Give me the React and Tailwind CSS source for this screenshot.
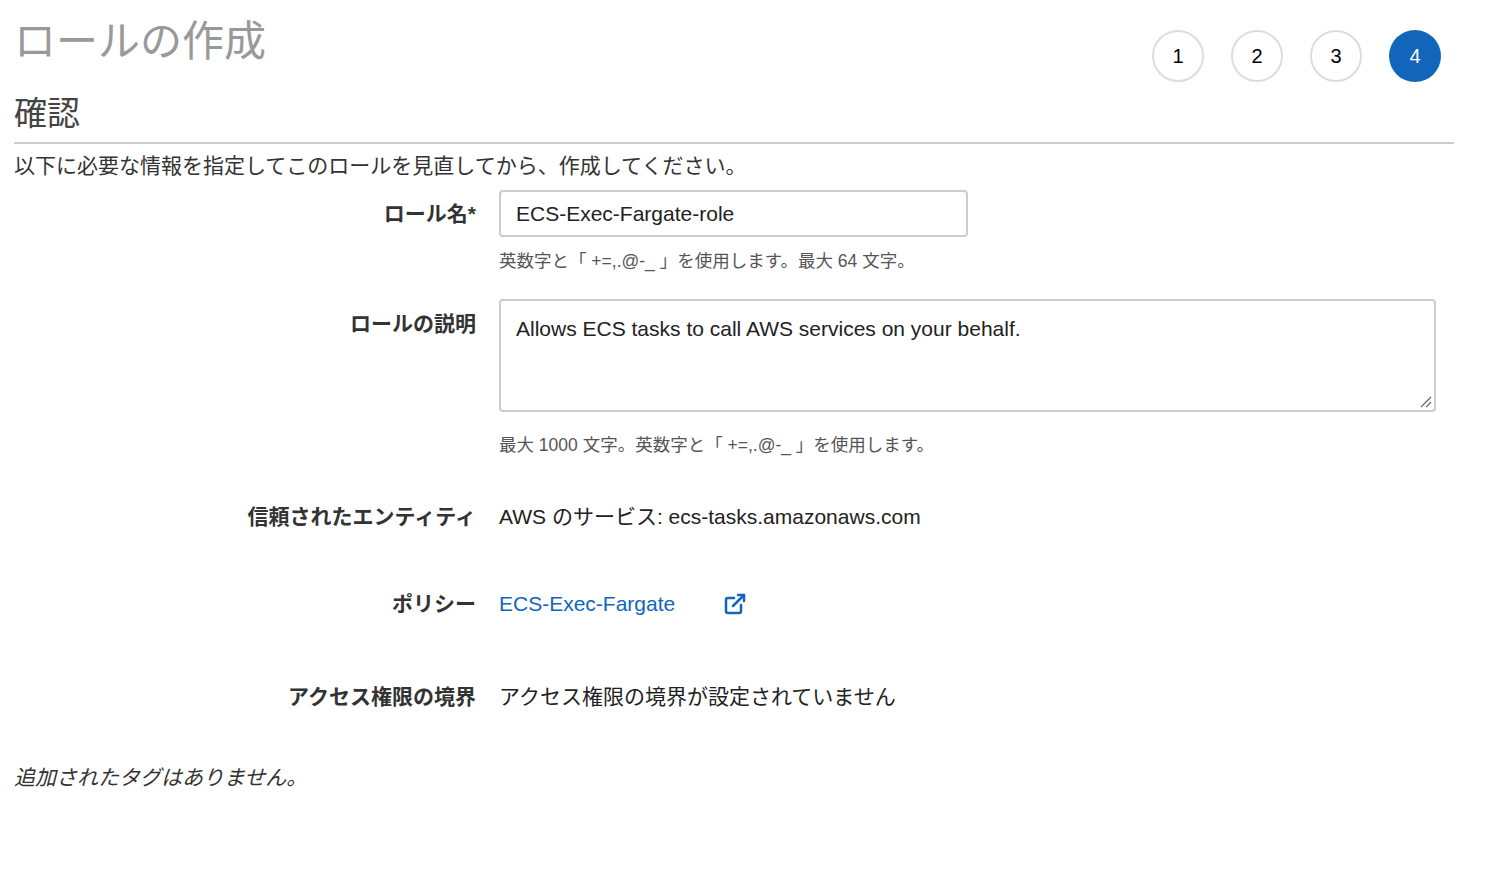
import { ExternalLink } from "lucide-react";

const font = { fontFamily: '"Liberation Sans", "Noto Sans CJK JP", sans-serif' };

function Row({ label, children, className = "" }) {
  return (
    <div className={"flex " + className}>
      <div className="w-[462px] shrink-0 text-right text-[21px] font-bold text-[#333]">{label}</div>
      <div className="ml-[23px] flex-1">{children}</div>
    </div>
  );
}

export default function App() {
  return (
    <div className="relative w-[1492px] h-[874px] bg-white pl-[14px] pr-[38px]" style={font}>
      <div className="flex items-start justify-between">
        <h1 className="pt-[16px] text-[42px] leading-[52px] text-[#999]">ロールの作成</h1>
        <div className="mt-[30px] mr-[13px] flex gap-[27px]">
          {["1", "2", "3"].map((n) => (
            <div key={n} className="flex h-[52px] w-[52px] items-center justify-center rounded-full border-2 border-[#ddd] text-[20px] text-black">{n}</div>
          ))}
          <div className="flex h-[52px] w-[52px] items-center justify-center rounded-full bg-[#1166bb] text-[20px] text-white">4</div>
        </div>
      </div>
      <h2 className="mt-[12px] text-[33px] leading-[40px] text-[#444]">確認</h2>
      <div className="mt-[8px] h-[2px] bg-[#ccc]" />
      <p className="mt-[8px] text-[21px] leading-[28px] text-[#333]">以下に必要な情報を指定してこのロールを見直してから、作成してください。</p>

      <Row label="ロール名*" className="mt-[10px] items-center">
        <div className="flex h-[47px] w-[469px] items-center rounded-[4px] border-2 border-[#ccc] px-[15px] text-[21px] text-[#222]">ECS-Exec-Fargate-role</div>
      </Row>
      <Row label="" className="mt-[11px]">
        <p className="text-[17.5px] text-[#555]">英数字と「 +=,.@-_ 」を使用します。最大 64 文字。</p>
      </Row>

      <Row label={<span className="block pt-[9px]">ロールの説明</span>} className="mt-[25px]">
        <div className="relative h-[113px] w-[937px] rounded-[4px] border-2 border-[#ccc] px-[15px] pt-[12px] text-[21px] text-[#222]">
          Allows ECS tasks to call AWS services on your behalf.
          <svg className="absolute bottom-[2px] right-[2px]" width="14" height="14" viewBox="0 0 14 14"><path d="M13 3L3 13M13 8L8 13" stroke="#666" strokeWidth="1.2" /></svg>
        </div>
      </Row>
      <Row label="" className="mt-[20px]">
        <p className="text-[17.5px] text-[#555]">最大 1000 文字。英数字と「 +=,.@-_ 」を使用します。</p>
      </Row>

      <Row label="信頼されたエンティティ" className="mt-[42px]">
        <p className="text-[21px] text-[#222]">AWS のサービス: ecs-tasks.amazonaws.com</p>
      </Row>
      <Row label="ポリシー" className="mt-[56px]">
        <div className="flex items-center text-[21px] text-[#1166bb]">
          ECS-Exec-Fargate<span className="w-[48px]" />
          <ExternalLink size={24} strokeWidth={2.5} />
        </div>
      </Row>
      <Row label="アクセス権限の境界" className="mt-[61px]">
        <p className="text-[21px] text-[#222]">アクセス権限の境界が設定されていません</p>
      </Row>
      <p className="mt-[50px] text-[21px] italic text-[#333]">追加されたタグはありません。</p>
    </div>
  );
}
